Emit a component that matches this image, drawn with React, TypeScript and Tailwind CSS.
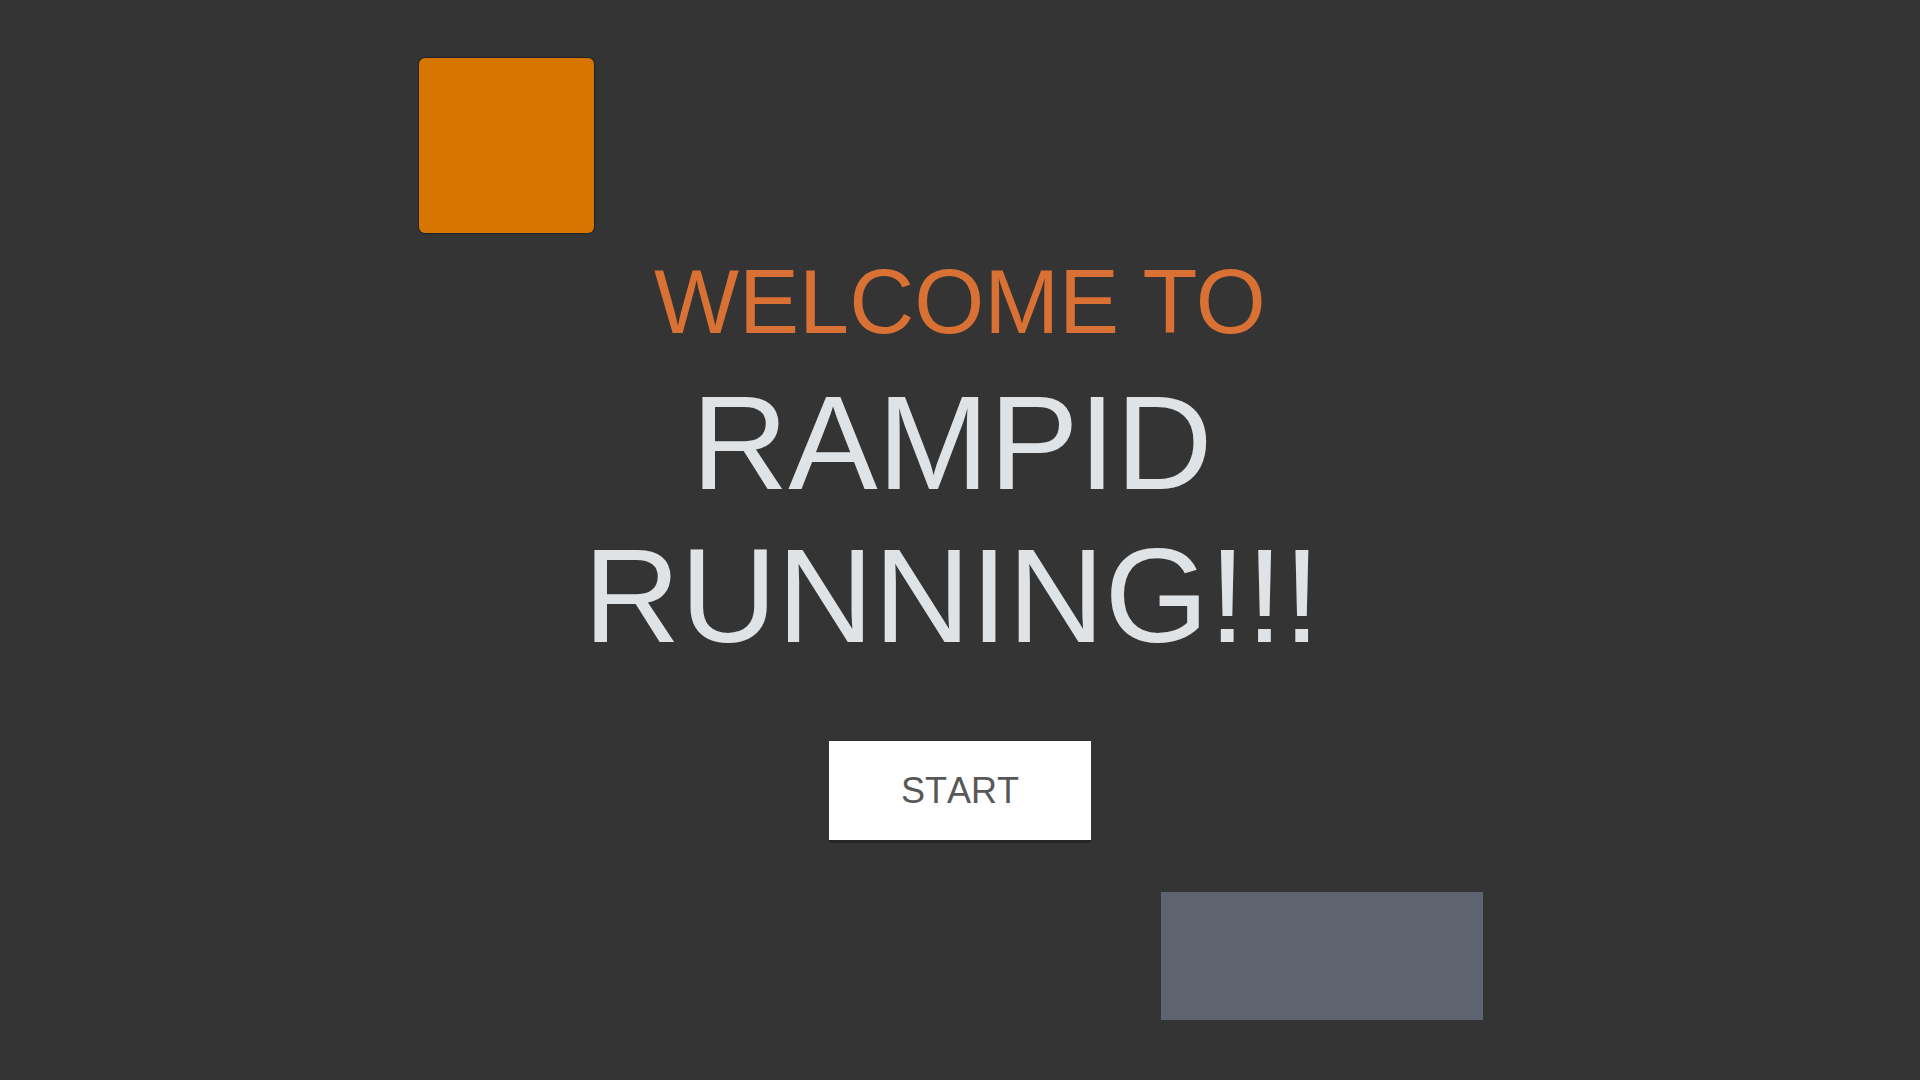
export default function App() {
  return (
    <main className="flex min-h-screen flex-col items-center bg-[#343434] font-['Liberation_Sans',Arial,sans-serif]">
      <div className="flex w-full max-w-[1082px] pt-[58px]">
        <div className="size-[175px] rounded-md bg-[#d67500] shadow-[0_0_1px_1px_rgba(0,0,0,0.35)]" />
      </div>
      <h1 className="flex flex-col items-center text-center">
        <span className="mt-[17px] text-[90px] leading-[104px] text-[#d97134]">WELCOME TO</span>
        <span className="mt-3 max-w-[760px] pr-4 text-[134px] leading-[153px] text-[#dfe3e6]">RAMPID RUNNING!!!</span>
      </h1>
      <button type="button" className="mt-[69px] h-[99px] w-[262px] bg-white text-[36px] text-[#585858] shadow-[0_3px_0_#262626] [font-kerning:none]">START</button>
      <div className="mt-[52px] flex w-full max-w-[1046px] justify-end">
        <div className="h-[128px] w-[322px] bg-[#5f6570]" />
      </div>
    </main>
  );
}
